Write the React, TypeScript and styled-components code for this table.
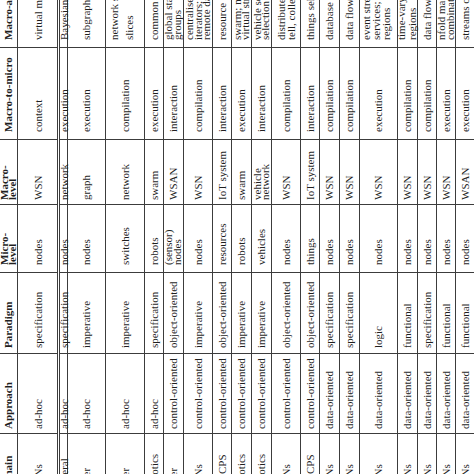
import React from 'react';
import styled, { createGlobalStyle } from 'styled-components';

const Global = createGlobalStyle`
  html, body { margin: 0; padding: 0; background: #ffffff; }
  #root { width: 474px; height: 474px; }
`;

const Viewport = styled.div`
  width: 474px;
  height: 474px;
  overflow: hidden;
  background: #ffffff;
`;

/* The table is a landscape page: it is laid out normally and turned a quarter turn. */
const Sheet = styled.div`
  width: 720px;
  transform-origin: 0 0;
  transform: translate(-1px, 508px) rotate(-90deg);
  font-family: "Liberation Serif", "DejaVu Serif", serif;
  font-size: 11px;
  color: #1f1f1f;
  display: flex;
  flex-direction: column;
`;

const Row = styled.div<{ $h: number; $double?: boolean }>`
  display: grid;
  grid-template-columns: 75px 80px 81px 68px 65px 92px 259px;
  grid-template-rows: minmax(0, 1fr);
  height: ${(p) => p.$h}px;
  box-sizing: border-box;
  border-bottom: ${(p) => (p.$double ? '3px double #3c3c3c' : '1px solid #3c3c3c')};
`;

const Cell = styled.div<{ $pad: number; $lh: number; $bold?: boolean; $top?: boolean }>`
  display: flex;
  flex-direction: column;
  justify-content: ${(p) => (p.$top ? 'flex-start' : 'center')};
  align-items: flex-start;
  padding-left: ${(p) => p.$pad}px;
  padding-top: ${(p) => (p.$top ? 1 : 0)}px;
  border-right: 1px solid #3c3c3c;
  line-height: ${(p) => p.$lh}px;
  font-weight: ${(p) => (p.$bold ? 700 : 400)};
  white-space: nowrap;
  min-height: 0;
  min-width: 0;
`;

const Line = styled.span`
  display: block;
`;

type Val = string | string[];
type RowData = {
  h: number;
  double?: boolean;
  lh?: number;
  top?: boolean;
  cells: Val[];
};

const pads = [15, 4, 5, 7, 4, 7, 7];

const header: Val[] = [
  'Domain',
  'Approach',
  'Paradigm',
  ['Micro-', 'level'],
  ['Macro-', 'level'],
  'Macro-to-micro',
  'Macro-abstraction',
];

const rows: RowData[] = [
  { h: 42, double: true, cells: ['WSNs', 'ad-hoc', 'specification', 'nodes', 'WSN', 'context', 'virtual machine'] },
  { h: 7.4, cells: ['General', 'ad-hoc', 'specification', 'nodes', 'network', 'execution', 'Bayesian network'] },
  { h: 38.6, cells: ['Other', 'ad-hoc', 'imperative', 'nodes', 'graph', 'execution', 'subgraph'] },
  { h: 38.7, lh: 15, top: true, cells: ['Other', 'ad-hoc', 'imperative', 'switches', 'network', 'compilation', ['network service', 'slices']] },
  { h: 19.3, cells: ['Robotics', 'ad-hoc', 'specification', 'robots', 'swarm', 'execution', 'common belief'] },
  { h: 19.4, lh: 9.5, cells: ['Other', 'control-oriented', 'object-oriented', ['(sensor)', 'nodes'], 'WSAN', 'interaction', ['global state;', 'groups']] },
  { h: 29.3, lh: 8.6, cells: ['WSNs', 'control-oriented', 'imperative', 'nodes', 'WSN', 'compilation', ['centralised', 'iterators;', 'remote data']] },
  { h: 19.3, cells: ['IoT/CPS', 'control-oriented', 'object-oriented', 'resources', 'IoT system', 'interaction', 'resource graph'] },
  { h: 19.4, lh: 8.6, cells: ['Robotics', 'control-oriented', 'imperative', 'robots', 'swarm', 'execution', ['swarm; neighbours;', 'virtual structure']] },
  { h: 20, lh: 8.6, cells: ['Robotics', 'control-oriented', 'imperative', 'vehicles', ['vehicle', 'network'], 'interaction', ['vehicle sets;', 'selection area']] },
  { h: 29.3, lh: 10, cells: ['WSNs', 'control-oriented', 'object-oriented', 'nodes', 'WSN', 'compilation', ['distributed', 'tell, collect']] },
  { h: 19.3, cells: ['IoT/CPS', 'control-oriented', 'object-oriented', 'things', 'IoT system', 'interaction', 'things selection'] },
  { h: 19.4, cells: ['WSNs', 'data-oriented', 'specification', 'nodes', 'WSN', 'compilation', 'database'] },
  { h: 20, cells: ['WSNs', 'data-oriented', 'specification', 'nodes', 'WSN', 'compilation', 'data flow'] },
  { h: 38.6, lh: 10, top: true, cells: ['WSNs', 'data-oriented', 'logic', 'nodes', 'WSN', 'execution', ['event streams;', 'services; logical', 'regions']] },
  { h: 19.4, lh: 11, cells: ['WSNs', 'data-oriented', 'functional', 'nodes', 'WSN', 'compilation', ['time-varying', 'regions']] },
  { h: 19.3, cells: ['WSNs', 'data-oriented', 'specification', 'nodes', 'WSN', 'compilation', 'data flow'] },
  { h: 19.3, lh: 9.5, cells: ['WSNs', 'data-oriented', 'functional', 'nodes', 'WSN', 'execution', ['nfold macro-', 'combinators']] },
  { h: 19, cells: ['WSNs', 'data-oriented', 'functional', 'nodes', 'WSAN', 'execution', 'streams of values'] },
];

const render = (v: Val) =>
  Array.isArray(v) ? v.map((t, i) => <Line key={i}>{t}</Line>) : <Line>{v}</Line>;

export default function App() {
  return (
    <>
      <Global />
      <Viewport>
        <Sheet>
          <Row $h={19.3}>
            {header.map((v, i) => (
              <Cell key={i} $pad={pads[i]} $lh={8} $bold>
                {render(v)}
              </Cell>
            ))}
          </Row>
          {rows.map((r, ri) => (
            <Row key={ri} $h={r.h} $double={r.double}>
              {r.cells.map((v, i) => (
                <Cell
                  key={i}
                  $pad={pads[i]}
                  $lh={Array.isArray(v) ? r.lh ?? 12 : 12}
                  $top={r.top && Array.isArray(v)}
                >
                  {render(v)}
                </Cell>
              ))}
            </Row>
          ))}
        </Sheet>
      </Viewport>
    </>
  );
}
